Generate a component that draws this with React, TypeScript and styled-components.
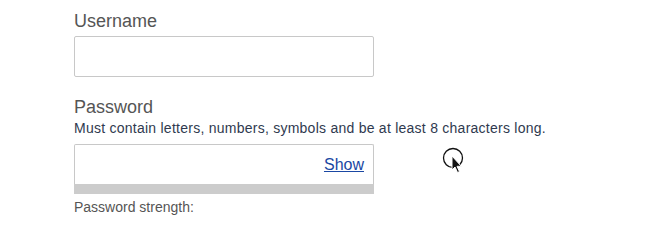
import { createGlobalStyle } from 'styled-components';
import styled from 'styled-components';

const GlobalStyle = createGlobalStyle`
  html, body {
    margin: 0;
    background: #ffffff;
  }
  body {
    font-family: "Liberation Sans", Arial, sans-serif;
  }
`;

export default function App() {
  return (
    <Page>
      <GlobalStyle />
      <Form>
        <Field>
          <Label htmlFor="username">Username</Label>
          <TextInput id="username" type="text" />
        </Field>
        <Field>
          <Label htmlFor="password">Password</Label>
          <Hint>Must contain letters, numbers, symbols and be at least 8 characters long.</Hint>
          <PasswordBox>
            <PasswordRow>
              <PasswordInput id="password" type="password" />
              <ShowLink href="#">Show</ShowLink>
            </PasswordRow>
            <StrengthBar />
          </PasswordBox>
          <StrengthText>Password strength:</StrengthText>
        </Field>
      </Form>
      <Cursor width="26" height="32" viewBox="0 0 26 32">
        <circle cx="11" cy="11" r="9.5" fill="none" stroke="#111" strokeWidth="1.3" />
        <path
          d="M10 9 L10 23 L13 20 L15.5 25.5 L17.5 24.6 L15 19.3 L19.3 19.3 Z"
          fill="#111"
          stroke="#fff"
          strokeWidth="1"
          strokeLinejoin="round"
        />
      </Cursor>
    </Page>
  );
}

const Page = styled.div`
  position: relative;
  width: 652px;
  height: 232px;
  overflow: hidden;
`;

const Form = styled.form`
  display: flex;
  flex-direction: column;
  gap: 19px;
  padding: 10px 0 0 74px;
`;

const Field = styled.div`
  display: flex;
  flex-direction: column;
`;

const Label = styled.label`
  font-size: 18px;
  line-height: 22px;
  color: #555555;
  margin-bottom: 4px;
`;

const Hint = styled.div`
  font-size: 14px;
  line-height: 17px;
  letter-spacing: 0.25px;
  color: #2f3a4f;
  margin-top: -2px;
  margin-bottom: 7px;
`;

const TextInput = styled.input`
  box-sizing: border-box;
  width: 300px;
  height: 41px;
  border: 1px solid #c8c8c8;
  border-radius: 2px;
  background: #fff;
  outline: none;
  padding: 0 10px;
`;

const PasswordBox = styled.div`
  box-sizing: border-box;
  width: 300px;
  border: 1px solid #c8c8c8;
  border-bottom: none;
  border-radius: 2px 2px 0 0;
  display: flex;
  flex-direction: column;
`;

const PasswordRow = styled.div`
  display: flex;
  align-items: center;
  height: 39px;
  padding-right: 9px;
`;

const PasswordInput = styled.input`
  flex: 1;
  min-width: 0;
  height: 100%;
  border: none;
  outline: none;
  background: transparent;
  padding: 0 10px;
`;

const ShowLink = styled.a`
  font-size: 16px;
  color: #1a47a3;
  text-decoration: underline;
`;

const StrengthBar = styled.div`
  height: 10px;
  margin: 0 -1px;
  background: #cccccc;
`;

const StrengthText = styled.div`
  font-size: 14px;
  line-height: 16px;
  color: #555555;
  margin-top: 5px;
`;

const Cursor = styled.svg`
  position: absolute;
  left: 442px;
  top: 147px;
`;
